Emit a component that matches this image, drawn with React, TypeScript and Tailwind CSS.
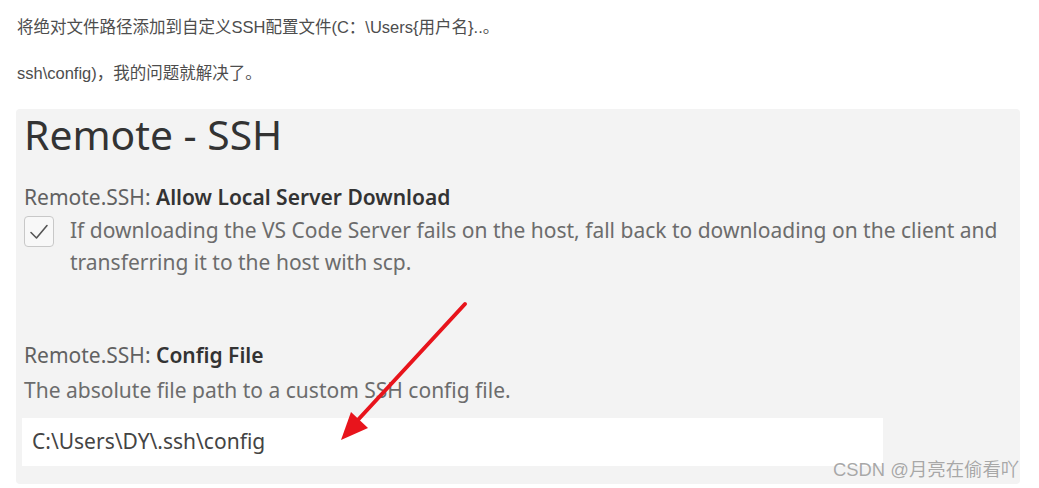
import React from "react";

export default function App() {
  const cn = '"Liberation Sans", "Noto Sans CJK SC", sans-serif';
  const ui = '"Noto Sans", "Open Sans", sans-serif';
  return (
    <div className="relative w-[1039px] h-[488px] bg-white overflow-hidden">
      <div className="pl-[17px] pt-[14px] text-[16.5px] text-[#4d4d4d]" style={{ fontFamily: cn }}>
        <p className="h-[24px] leading-[24px] mt-[1px]">将绝对文件路径添加到自定义SSH配置文件(C：\Users{"{"}用户名{"}"}..。</p>
        <p className="h-[24px] leading-[24px] mt-[22px]">ssh\config)，我的问题就解决了。</p>
      </div>
      <div
        className="ml-[16px] mt-[24px] w-[1004px] h-[375px] bg-[#f3f3f3] rounded-[4px] pl-[8px] pt-[1px]"
        style={{ fontFamily: ui }}
      >
        <h1 className="text-[40.8px] leading-[48px] text-[#333333] font-normal">Remote - SSH</h1>
        <div className="mt-[26px] text-[21px] leading-[26px] text-[#616161]">
          Remote.SSH: <span className="font-semibold text-[#333333]">Allow Local Server Download</span>
        </div>
        <div className="flex mt-[4px]">
          <div className="w-[30px] h-[31px] mt-[2px] shrink-0 border border-[#c8c8c8] rounded-[4px] bg-[#f8f8f8] flex items-center justify-center">
            <svg width="22" height="22" viewBox="0 0 22 22" fill="none">
              <path d="M3 11.5 L8.5 17 L19 4.5" stroke="#555" strokeWidth="1.6" strokeLinecap="round" strokeLinejoin="round" />
            </svg>
          </div>
          <p className="ml-[16px] text-[21px] leading-[32px] text-[#6c6c6c] w-[940px]">
            If downloading the VS Code Server fails on the host, fall back to downloading on the client and transferring it to the host with scp.
          </p>
        </div>
        <div className="mt-[64px] text-[21px] leading-[26px] text-[#616161]">
          Remote.SSH: <span className="font-semibold text-[#333333]">Config File</span>
        </div>
        <p className="mt-[8px] text-[21px] leading-[28px] text-[#6c6c6c]">The absolute file path to a custom SSH config file.</p>
        <div className="ml-[-2px] mt-[14px] w-[861px] h-[48px] bg-white flex items-center pl-[10px] text-[21px] text-[#444444]">
          C:\Users\DY\.ssh\config
        </div>
      </div>
      <svg className="absolute left-0 top-0 pointer-events-none" width="1039" height="488">
        <line x1="465" y1="304" x2="356" y2="422" stroke="#e8141c" strokeWidth="4" strokeLinecap="round" />
        <polygon points="341,440 351,412 368,428" fill="#e8141c" />
      </svg>
      <div
        className="absolute left-[833px] top-[456px] text-[18.4px] text-[#a8a8a8]"
        style={{ fontFamily: cn, textShadow: "0 0 1px #ffffff" }}
      >
        CSDN @月亮在偷看吖
      </div>
    </div>
  );
}
